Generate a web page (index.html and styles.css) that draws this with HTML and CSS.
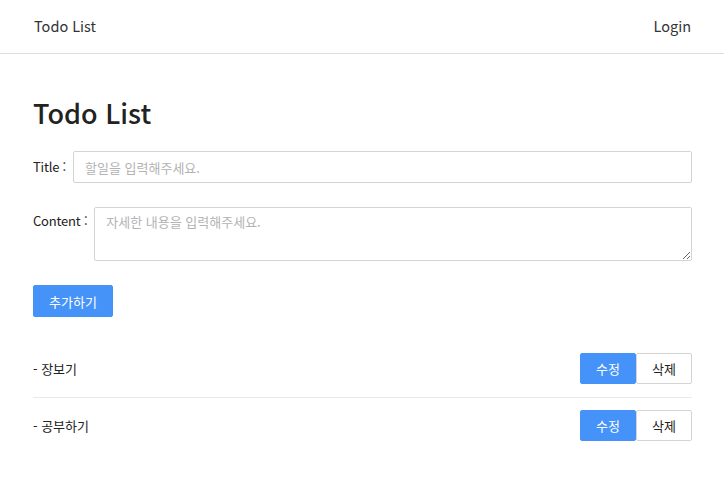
FILE: index.html
```html
<!DOCTYPE html>
<html lang="ko">
<head>
<meta charset="utf-8">
<title>Todo List</title>
<link rel="stylesheet" href="styles.css">
</head>
<body>
<header class="nav">
  <span class="brand">Todo List</span>
  <span class="login">Login</span>
</header>
<main class="page">
  <h1 class="title">Todo List</h1>
  <div class="field field-title">
    <label class="label">Title :</label>
    <input class="input" type="text" placeholder="할일을 입력해주세요.">
  </div>
  <div class="field field-content">
    <label class="label">Content :</label>
    <textarea class="textarea" placeholder="자세한 내용을 입력해주세요."></textarea>
  </div>
  <button class="btn btn-primary add">추가하기</button>
  <ul class="list">
    <li class="item">
      <span class="item-text">- 장보기</span>
      <div class="actions">
        <button class="btn btn-primary act">수정</button>
        <button class="btn btn-outline act">삭제</button>
      </div>
    </li>
    <li class="item">
      <span class="item-text">- 공부하기</span>
      <div class="actions">
        <button class="btn btn-primary act">수정</button>
        <button class="btn btn-outline act">삭제</button>
      </div>
    </li>
  </ul>
</main>
</body>
</html>
```
FILE: styles.css
```css
* { box-sizing: border-box; }
html, body { margin: 0; padding: 0; background: #fff; }
body {
  font-family: "Noto Sans CJK KR", "Noto Sans", sans-serif;
  color: #222;
}
.nav {
  height: 54px;
  border-bottom: 1px solid #ddd;
  display: flex;
  align-items: center;
  justify-content: space-between;
  padding: 0 33px 2px 34px;
  font-size: 14.5px;
  color: #333;
}
.page { padding: 0 32px 0 33px; }
.title {
  font-size: 27px;
  font-weight: 500;
  margin: 39px 0 0;
  line-height: 40px;
  color: #222;
}
.field { display: flex; align-items: flex-start; }
.field-title { margin-top: 18px; }
.field-content { margin-top: 24px; }
.label {
  font-size: 13px;
  color: #222;
  margin-right: 7px;
  white-space: nowrap;
  letter-spacing: -0.2px;
}
.field-title .label { line-height: 31px; }
.field-content .label { line-height: 27px; }
.input, .textarea {
  flex: 1;
  border: 1px solid #d4d4d4;
  border-radius: 2px;
  font-family: inherit;
  font-size: 13px;
  color: #333;
  padding: 0 11px;
  outline: none;
}
.input { height: 32px; }
.textarea { height: 54px; padding-top: 4px; resize: vertical; }
.input::placeholder, .textarea::placeholder { color: #b3b3b3; }
.btn {
  font-family: inherit;
  font-size: 13px;
  border-radius: 2px;
  cursor: pointer;
}
.btn-primary { background: #4593f8; color: #fff; border: 1px solid #4593f8; }
.btn-outline { background: #fff; color: #222; border: 1px solid #d4d4d4; }
.add { margin-top: 24px; width: 80px; height: 32px; display: block; }
.list { list-style: none; margin: 24px 0 0; padding: 0; }
.item {
  display: flex;
  align-items: center;
  justify-content: space-between;
  padding: 12px 0 13px;
  border-bottom: 1px solid #eaeaea;
  font-size: 13px;
}
.item:last-child { border-bottom: none; }
.actions { display: flex; }
.act { width: 56px; height: 31px; }
```
